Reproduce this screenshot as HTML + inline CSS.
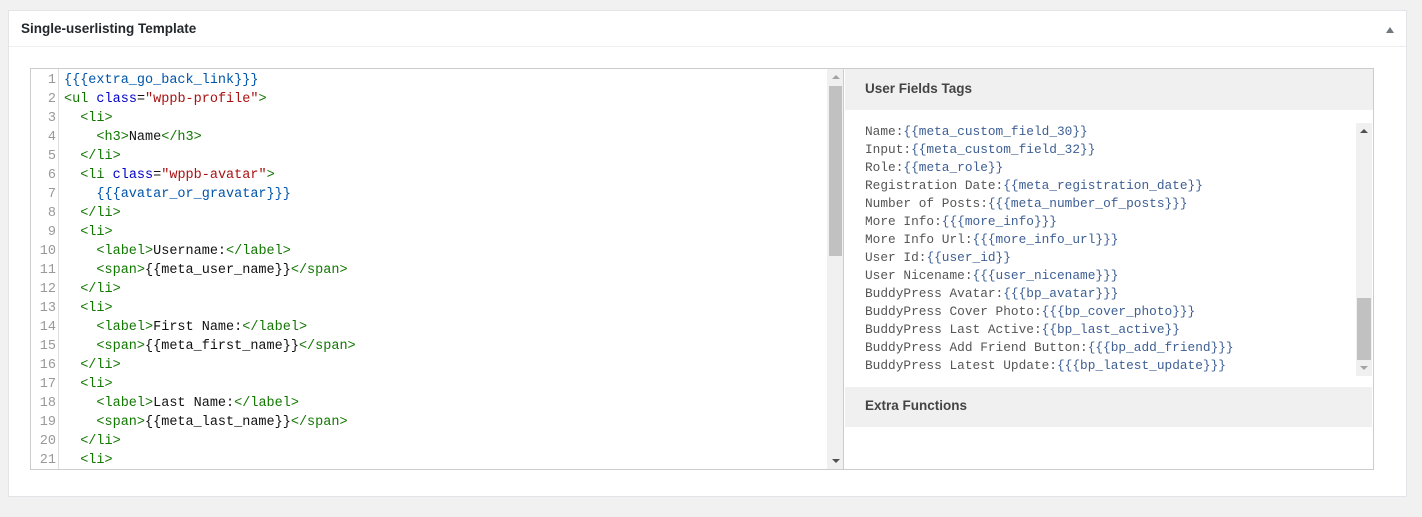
<!DOCTYPE html>
<html><head><style>
*{margin:0;padding:0;box-sizing:border-box}
body{width:1422px;height:517px;background:#f1f1f1;position:relative;overflow:hidden;font-family:"Liberation Sans",sans-serif}
.panel{position:absolute;left:8px;top:10px;width:1399px;height:487px;background:#fff;border:1px solid #e2e4e7}
.hdr{height:36px;border-bottom:1px solid #eee;font-size:13.5px;font-weight:bold;color:#23282d;padding:10px 0 0 12px}
.tri{position:absolute;right:12px;top:16px;width:0;height:0;border-left:4px solid transparent;border-right:4px solid transparent;border-bottom:6px solid #72777c}
.ed{position:absolute;left:30px;top:68px;width:1344px;height:402px;border:1px solid #ccc;background:#fff;overflow:hidden}
.gut{position:absolute;left:0;top:0;width:28px;height:400px;background:#fff;border-right:1px solid #ddd}
.code{position:absolute;left:0;top:2px;font-family:"Liberation Mono",monospace;font-size:13.5px;line-height:19px;white-space:pre;color:#111}
.ln{display:inline-block;width:25px;text-align:right;color:#999;margin-right:8px}
.t{color:#170}.a{color:#00c}.s{color:#a11}.b{color:#05a}
.sb{position:absolute;left:796px;top:0;width:17px;height:400px;background:#f0f0f0;border-right:1px solid #ccc}
.sb .th{position:absolute;left:2px;top:17px;width:13px;height:170px;background:#c1c1c1}
.up{position:absolute;left:5px;top:6px;border-left:4px solid transparent;border-right:4px solid transparent;border-bottom:4px solid #a3a3a3}
.dn{position:absolute;left:5px;bottom:6px;border-left:4px solid transparent;border-right:4px solid transparent;border-top:4px solid #505050}
.rp{position:absolute;left:814px;top:0;width:529px;height:400px}
.rh{height:41px;background:#f0f0f0;font-size:13.5px;font-weight:bold;color:#444;padding:12px 0 0 20px}
.list{position:absolute;left:0;top:54px;width:527px;height:253px}
.lt{position:absolute;left:20px;top:0;font-family:"Liberation Mono",monospace;font-size:12.8px;line-height:18px;white-space:pre;color:#555}
.lt i{font-style:normal;color:#3d5f94}
.sb2{position:absolute;left:511px;top:0;width:16px;height:253px;background:#f0f0f0}
.sb2 .th{position:absolute;left:1px;top:175px;width:14px;height:62px;background:#c1c1c1}
.ef{position:absolute;left:0;top:318px;width:527px;height:40px;background:#f0f0f0;font-size:13.5px;font-weight:bold;color:#444;padding:11px 0 0 20px}
</style></head><body>
<div class="panel"><div class="hdr">Single-userlisting Template</div><div class="tri"></div></div>
<div class="ed">
<div class="gut"></div>
<div class="code"><span class="ln">1</span><span class="b">{{{extra_go_back_link}}}</span>
<span class="ln">2</span><span class="t">&lt;ul</span> <span class="a">class</span>=<span class="s">"wppb-profile"</span><span class="t">&gt;</span>
<span class="ln">3</span>  <span class="t">&lt;li&gt;</span>
<span class="ln">4</span>    <span class="t">&lt;h3&gt;</span>Name<span class="t">&lt;/h3&gt;</span>
<span class="ln">5</span>  <span class="t">&lt;/li&gt;</span>
<span class="ln">6</span>  <span class="t">&lt;li</span> <span class="a">class</span>=<span class="s">"wppb-avatar"</span><span class="t">&gt;</span>
<span class="ln">7</span>    <span class="b">{{{avatar_or_gravatar}}}</span>
<span class="ln">8</span>  <span class="t">&lt;/li&gt;</span>
<span class="ln">9</span>  <span class="t">&lt;li&gt;</span>
<span class="ln">10</span>    <span class="t">&lt;label&gt;</span>Username:<span class="t">&lt;/label&gt;</span>
<span class="ln">11</span>    <span class="t">&lt;span&gt;</span>{{meta_user_name}}<span class="t">&lt;/span&gt;</span>
<span class="ln">12</span>  <span class="t">&lt;/li&gt;</span>
<span class="ln">13</span>  <span class="t">&lt;li&gt;</span>
<span class="ln">14</span>    <span class="t">&lt;label&gt;</span>First Name:<span class="t">&lt;/label&gt;</span>
<span class="ln">15</span>    <span class="t">&lt;span&gt;</span>{{meta_first_name}}<span class="t">&lt;/span&gt;</span>
<span class="ln">16</span>  <span class="t">&lt;/li&gt;</span>
<span class="ln">17</span>  <span class="t">&lt;li&gt;</span>
<span class="ln">18</span>    <span class="t">&lt;label&gt;</span>Last Name:<span class="t">&lt;/label&gt;</span>
<span class="ln">19</span>    <span class="t">&lt;span&gt;</span>{{meta_last_name}}<span class="t">&lt;/span&gt;</span>
<span class="ln">20</span>  <span class="t">&lt;/li&gt;</span>
<span class="ln">21</span>  <span class="t">&lt;li&gt;</span></div>
<div class="sb"><div class="up"></div><div class="th"></div><div class="dn"></div></div>
<div class="rp">
<div class="rh">User Fields Tags</div>
<div class="list"><div class="lt">Name:<i>{{meta_custom_field_30}}</i>
Input:<i>{{meta_custom_field_32}}</i>
Role:<i>{{meta_role}}</i>
Registration Date:<i>{{meta_registration_date}}</i>
Number of Posts:<i>{{{meta_number_of_posts}}}</i>
More Info:<i>{{{more_info}}}</i>
More Info Url:<i>{{{more_info_url}}}</i>
User Id:<i>{{user_id}}</i>
User Nicename:<i>{{{user_nicename}}}</i>
BuddyPress Avatar:<i>{{{bp_avatar}}}</i>
BuddyPress Cover Photo:<i>{{{bp_cover_photo}}}</i>
BuddyPress Last Active:<i>{{bp_last_active}}</i>
BuddyPress Add Friend Button:<i>{{{bp_add_friend}}}</i>
BuddyPress Latest Update:<i>{{{bp_latest_update}}}</i></div>
<div class="sb2"><div class="up" style="left:4px;border-bottom-color:#505050"></div><div class="th"></div><div class="dn" style="left:4px;border-top-color:#a3a3a3"></div></div></div>
<div class="ef">Extra Functions</div>
</div>
</div>
</body></html>
